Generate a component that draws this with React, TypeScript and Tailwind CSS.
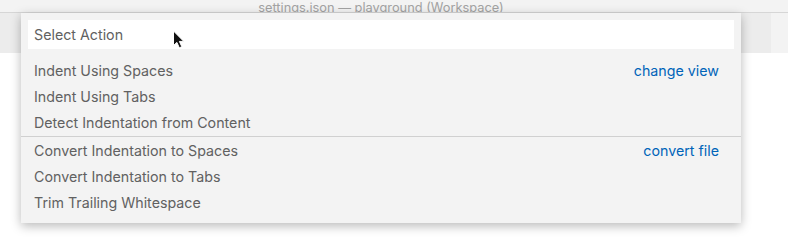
import React from "react";

const font = { fontFamily: "Inter, 'Open Sans', 'Liberation Sans', sans-serif" };

function Row({ label, link }: { label: string; link?: string }) {
  return (
    <div className="flex h-[26px] items-center justify-between pl-[13px] pr-[22px]">
      <span className="text-[14.25px] text-[#616161]">{label}</span>
      {link && <span className="text-[14.25px] text-[#0064b9]">{link}</span>}
    </div>
  );
}

export default function App() {
  return (
    <div className="relative h-[252px] w-[788px] overflow-hidden bg-white" style={font}>
      <div className="flex h-[13px] items-end justify-center overflow-hidden border-b border-[#d6d6d6] bg-[#f3f3f3]">
        <span className="mb-[-4px] pr-[26px] text-[12.8px] leading-[16px] text-[#a3a3a3]">
          settings.json — playground (Workspace)
        </span>
      </div>
      <div className="flex h-[40px] bg-[#ececec]">
        <div className="flex-1" />
        <div className="w-[17px] bg-[#f3f3f3]" />
      </div>

      <div className="absolute left-[21px] top-[13px] w-[720px] bg-[#f3f3f3] pb-[7px] pt-[7px] shadow-[0_3px_10px_rgba(0,0,0,0.28)]">
        <div className="mx-[7px] flex h-[29px] items-center bg-white pl-[6px]">
          <span className="text-[14.25px] text-[#616161]">Select Action</span>
        </div>
        <div className="mt-[9px]">
          <Row label="Indent Using Spaces" link="change view" />
          <Row label="Indent Using Tabs" />
          <Row label="Detect Indentation from Content" />
          <div className="h-px bg-[#d0d0d0]" />
          <div className="pt-[1px]">
            <Row label="Convert Indentation to Spaces" link="convert file" />
            <Row label="Convert Indentation to Tabs" />
            <Row label="Trim Trailing Whitespace" />
          </div>
        </div>
      </div>

      <svg className="absolute left-[172px] top-[30px]" width="14" height="19" viewBox="0 0 14 19">
        <path d="M1.5 1 L1.5 15.5 L4.9 12.4 L7.3 17.8 L9.8 16.7 L7.4 11.4 L11.8 11.4 Z" fill="#111" stroke="#fff" strokeWidth="1" strokeLinejoin="round" />
      </svg>
    </div>
  );
}
